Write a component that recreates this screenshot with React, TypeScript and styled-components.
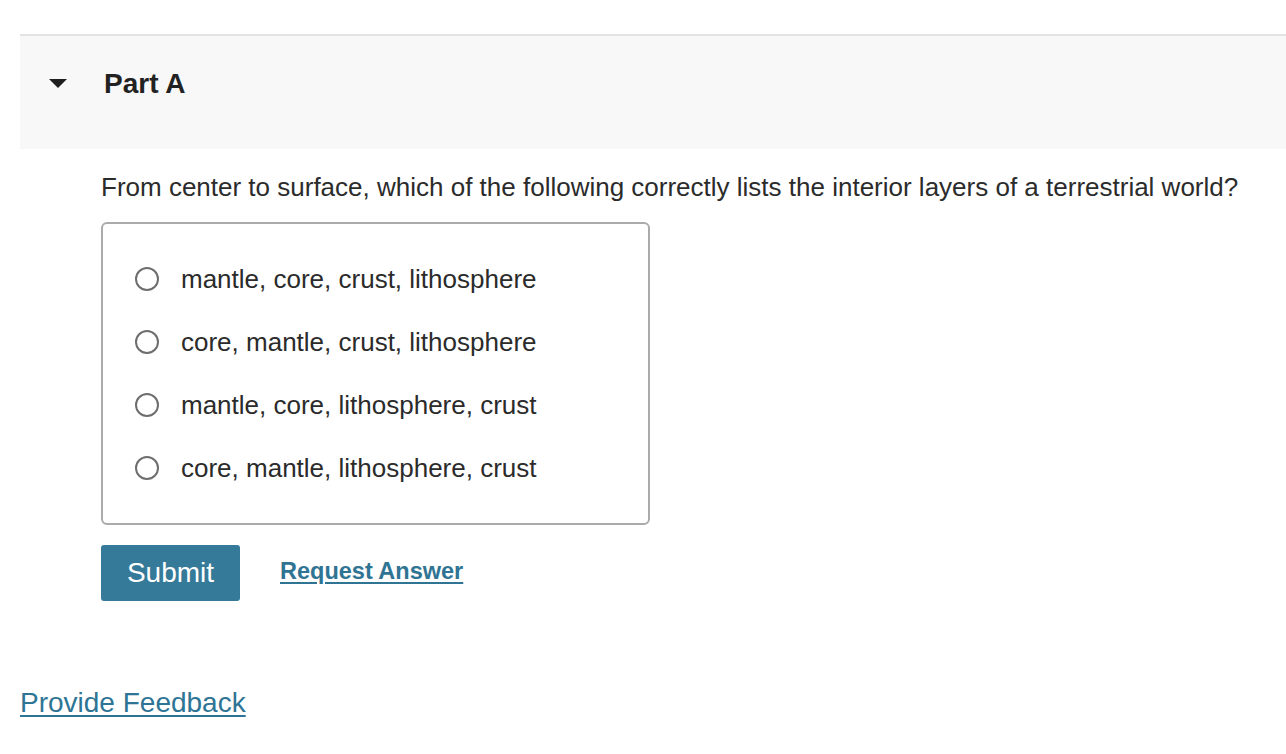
import React from "react";
import styled, { createGlobalStyle } from "styled-components";

const GlobalStyle = createGlobalStyle`
  body {
    margin: 0;
    background: #ffffff;
    font-family: "Liberation Sans", Arial, sans-serif;
    color: #222222;
  }
`;

const Page = styled.div`
  padding: 34px 0 0 20px;
`;

const PartHeader = styled.div`
  display: flex;
  align-items: center;
  height: 115px;
  box-sizing: border-box;
  padding-bottom: 18px;
  background: #f8f8f8;
  border-top: 2px solid #e3e3e3;
`;

const Caret = styled.span`
  width: 0;
  height: 0;
  margin: 0 37px 0 29px;
  border-left: 9px solid transparent;
  border-right: 9px solid transparent;
  border-top: 9px solid #1f1f1f;
`;

const PartTitle = styled.h2`
  margin: 0;
  font-size: 28px;
  font-weight: 700;
  color: #222222;
`;

const Body = styled.div`
  padding: 23px 0 0 81px;
`;

const Question = styled.p`
  margin: 0;
  font-size: 26px;
  line-height: 30px;
  color: #2b2b2b;
  white-space: nowrap;
`;

const Options = styled.div`
  display: flex;
  flex-direction: column;
  gap: 15px;
  width: 549px;
  box-sizing: border-box;
  margin-top: 20px;
  padding: 31px 0 31px 32px;
  border: 2px solid #ababab;
  border-radius: 6px;
`;

const Option = styled.label`
  display: flex;
  align-items: center;
  gap: 22px;
  height: 48px;
  font-size: 26px;
  color: #2b2b2b;
`;

const Radio = styled.span`
  width: 20px;
  height: 20px;
  border: 2px solid #6e6e6e;
  border-radius: 50%;
  background: #ffffff;
`;

const Actions = styled.div`
  display: flex;
  align-items: center;
  gap: 40px;
  margin-top: 20px;
`;

const SubmitButton = styled.button`
  width: 139px;
  height: 56px;
  border: none;
  border-radius: 3px;
  background: #367a99;
  color: #ffffff;
  font-family: "Liberation Sans", Arial, sans-serif;
  font-size: 28px;
`;

const RequestLink = styled.a`
  margin-bottom: 4px;
  color: #2f7493;
  font-size: 23.5px;
  font-weight: 700;
  text-decoration: underline;
  text-underline-offset: 3px;
`;

const Feedback = styled.a`
  display: inline-block;
  margin-top: 86px;
  color: #2e7595;
  font-size: 28px;
  text-decoration: underline;
  text-underline-offset: 3px;
`;

const answers = [
  "mantle, core, crust, lithosphere",
  "core, mantle, crust, lithosphere",
  "mantle, core, lithosphere, crust",
  "core, mantle, lithosphere, crust",
];

export default function App() {
  return (
    <>
      <GlobalStyle />
      <Page>
        <PartHeader>
          <Caret />
          <PartTitle>Part A</PartTitle>
        </PartHeader>
        <Body>
          <Question>
            From center to surface, which of the following correctly lists the interior layers of a terrestrial world?
          </Question>
          <Options>
            {answers.map((a) => (
              <Option key={a}>
                <Radio />
                {a}
              </Option>
            ))}
          </Options>
          <Actions>
            <SubmitButton>Submit</SubmitButton>
            <RequestLink href="#">Request Answer</RequestLink>
          </Actions>
        </Body>
        <Feedback href="#">Provide Feedback</Feedback>
      </Page>
    </>
  );
}
